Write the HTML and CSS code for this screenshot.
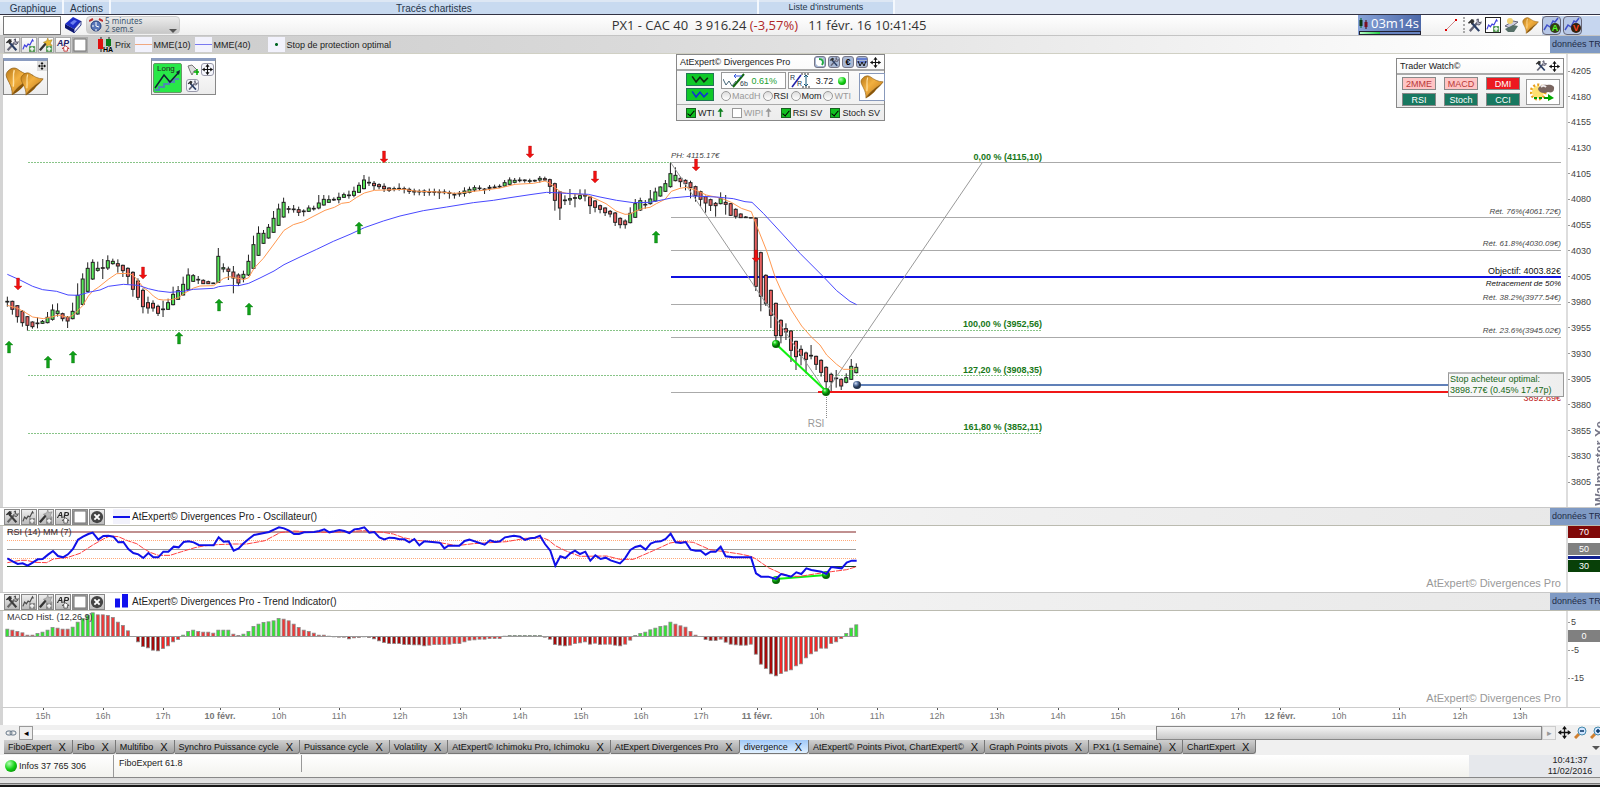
FILE: index.html
```html
<!DOCTYPE html>
<html lang="fr">

<head>
    <meta charset="utf-8">
    <title>PX1 - CAC 40</title>
    <link rel="stylesheet" href="styles.css">
</head>

<body>
    <!-- icons -->
    <svg class="sprite" width="0" height="0">
        <defs>
            <radialGradient id="ball-green" cx="35%" cy="30%">
                <stop offset="0" stop-color="#b8ffb0" />
                <stop offset=".45" stop-color="#18d018" />
                <stop offset="1" stop-color="#066a06" />
            </radialGradient>
            <radialGradient id="ball-blue" cx="35%" cy="30%">
                <stop offset="0" stop-color="#d5e0f2" />
                <stop offset=".5" stop-color="#5f7aa8" />
                <stop offset="1" stop-color="#24354f" />
            </radialGradient>
            <linearGradient id="gold" x1="0" y1="0" x2="1" y2="1">
                <stop offset="0" stop-color="#b87818" />
                <stop offset=".4" stop-color="#f2b040" />
                <stop offset="1" stop-color="#b87010" />
            </linearGradient>
        </defs>
        <symbol id="tools" viewBox="0 0 16 16">
            <path d="M3 14L12 4" stroke="#667" stroke-width="2.4" />
            <path d="M10 2l2-1v3l2 1 1-1c0 3-2 4-4 3" fill="#aab" stroke="#445" />
            <path d="M5 5l8 9" stroke="#2b3f66" stroke-width="2.4" />
            <path d="M1 5l4-4 3 1-1 1 1 1-3 3-1-2-2 1z" fill="#333" />
        </symbol>
        <symbol id="curve" viewBox="0 0 16 16">
            <path d="M1 13l2-5 2 2 2-3 2 1 3-6 1 2" fill="none" stroke="#4040e0" stroke-width="1.4" />
            <rect x="8" y="9" width="7" height="7" rx="1" fill="#5a9c5a" />
            <path d="M11.500 10v5M9 12.500h5" stroke="#fff" stroke-width="1.5" />
        </symbol>
        <symbol id="wand" viewBox="0 0 16 16">
            <path d="M1 14l7-8" stroke="#333" stroke-width="2.600" />
            <path d="M10 0l1 3 4-1-2 4 2 3-4-1-2 2-1-4-3-1 4-2z" fill="#e8b830" stroke="#a07810" stroke-width=".6" />
            <rect x="8" y="9" width="7" height="7" rx="1" fill="#5a9c5a" />
            <path d="M11.500 10v5M9 12.500h5" stroke="#fff" stroke-width="1.5" />
        </symbol>
        <symbol id="ap" viewBox="0 0 16 16">
            <text x="1" y="9" class="ap-text">AP</text>
            <path d="M11 9l4 3h-2v3h-4v-3h-2z" fill="#fff" stroke="#c03030" />
        </symbol>
        <symbol id="window" viewBox="0 0 16 16">
            <rect x="1" y="1" width="14" height="14" fill="#fff" stroke="#777" stroke-width="1.5" />
        </symbol>
        <symbol id="close" viewBox="0 0 16 16">
            <circle cx="8" cy="8" r="7" fill="#444" />
            <path d="M5 5l6 6M11 5l-6 6" stroke="#fff" stroke-width="2.200" />
        </symbol>
        <symbol id="move" viewBox="0 0 16 16">
            <path d="M8 1v14M1 8h14" stroke="#111" stroke-width="1.6" />
            <path d="M8 0l3 4H5zM8 16l3-4H5zM0 8l4-3v6zM16 8l-4-3v6z" fill="#111" />
        </symbol>
        <symbol id="bell" viewBox="0 0 28 28">
            <path d="M2 5C5 1 9 0 12 2c4 3 9 6 15 6-2 4-7 5-11 9-4 3-7 6-9 10 0-5-1-8-3-12C2 11 0 8 2 5z" fill="url(#gold)" stroke="#8a5a10" stroke-width=".7" />
            <path d="M27 8c-2 4-7 5-11 9-4 3-7 6-9 10 6-3 9-6 12-10 3-3 6-5 8-9z" fill="#8a5608" />
            <path d="M9 3c-2 5 0 9-1 16" stroke="#ffe0a0" stroke-width="1.4" fill="none" />
        </symbol>
        <symbol id="zigzag" viewBox="0 0 28 14">
            <path d="M4 3l5 7 5-6 5 6 5-5" fill="none" stroke="currentColor" stroke-width="2" />
        </symbol>
        <symbol id="up" viewBox="0 0 8 12">
            <path d="M4 0l4 5H5v7H3V5H0z" fill="currentColor" />
        </symbol>
    </svg>

    <div class="frame">
        <nav class="ribbon">
            <a href="#" class="ribbon-tab tab-first">Graphique</a>
            <a href="#" class="ribbon-tab tab-actions">Actions</a>
            <a href="#" class="ribbon-tab tab-tools">Tracés chartistes</a>
            <a href="#" class="ribbon-tab tab-list">Liste d'instruments</a>
        </nav>

        <header class="titlebar">
            <input type="text" class="symbol-box" aria-label="Valeur">
            <svg class="book" width="18" height="18" viewBox="0 0 18 18">
                <path d="M1 8l8-7 8 4-7 8z" fill="#1c2cc8" />
                <path d="M1 8l9 5v4l-9-5z" fill="#0a1470" />
                <path d="M10 13l7-8v4l-7 8z" fill="#e0e4ff" stroke="#0a1470" stroke-width=".8" />
                <path d="M6 7l4-3 3 1-4 4z" fill="#6c80f0" />
            </svg>
            <button class="period">
                <svg width="14" height="14" viewBox="0 0 14 14">
                    <circle cx="7" cy="8" r="5" fill="#5876b8" stroke="#26407c" />
                    <path d="M7 4v4l3 1M3 8h2M7 13v-2" stroke="#fff" fill="none" />
                    <path d="M0 3l4-2M10 1l4 2" stroke="#c03030" stroke-width="2" />
                </svg>
                <span>5 minutes<br>2 sem.s</span>
                <i class="caret"></i>
            </button>
            <h1>PX1 - CAC 40 &nbsp;3 916.24 <span class="change">(-3,57%)</span> &nbsp; 11 févr. 16 10:41:45</h1>
            <div class="timer">
                <svg width="10" height="14" viewBox="0 0 10 14">
                    <path d="M2 2v10" stroke="#062" stroke-width="1" /><path d="M2 4v6" stroke="#0a3a12" stroke-width="3" />
                    <path d="M7 4v9" stroke="#400" stroke-width="1" /><path d="M7 6v5" stroke="#7a1020" stroke-width="3" />
                </svg>
                <span>03m14s</span>
                <i class="timer-bar"></i>
            </div>
            <div class="actions">
                <button class="bare" aria-label="Ligne"><svg width="14" height="14" viewBox="0 0 14 14"><path d="M2 12L12 2" stroke="#c88" /><path d="M1 12h2M11 2h2" stroke="#d00" stroke-width="2" /></svg></button>
                <i class="grip"></i>
                <button class="bare" aria-label="Réglages"><svg width="15" height="15"><use href="#tools" /></svg></button>
                <button class="bare boxed" aria-label="Indicateur"><svg width="14" height="14"><use href="#curve" /></svg></button>
                <button class="bare" aria-label="Fond"><svg width="15" height="16" viewBox="0 0 15 16"><path d="M1 9l8-5 5 1-8 6z" fill="#ccd" stroke="#667" /><path d="M1 12l8-4 5 1-4 6H4z" fill="#567068" /><circle cx="6" cy="4" r="3" fill="#f0d070" /></svg></button>
                <button class="bare" aria-label="Alerte"><svg width="17" height="17"><use href="#bell" /></svg></button>
                <div class="auto">
                    <button class="bare round" aria-label="Achat"><svg width="18" height="18" viewBox="0 0 18 18"><path d="M1 14l3-5 3 2 3-6 2 1 3-4" fill="none" stroke="#4050c8" stroke-width="1.5" /><circle cx="12" cy="12" r="5" fill="#333a18" /><text x="12" y="15" class="badge buy">A</text></svg></button>
                    <button class="bare round" aria-label="Vente"><svg width="18" height="18" viewBox="0 0 18 18"><path d="M1 14l3-5 3 2 3-6 2 1 3-4" fill="none" stroke="#4050c8" stroke-width="1.5" /><circle cx="12" cy="12" r="5" fill="#33200c" /><text x="12" y="15" class="badge sell">V</text></svg></button>
                </div>
            </div>
        </header>

        <div class="legend">
            <div class="tools">
                <button aria-label="Réglages"><svg><use href="#tools" /></svg></button>
                <button aria-label="Indicateur"><svg><use href="#curve" /></svg></button>
                <button aria-label="Assistant"><svg><use href="#wand" /></svg></button>
                <button aria-label="AP"><svg><use href="#ap" /></svg></button>
                <button aria-label="Fenêtre"><svg><use href="#window" /></svg></button>
            </div>
            <svg class="ha" width="17" height="16" viewBox="0 0 17 16">
                <path d="M4 0v15M12 0v10" stroke="#222" />
                <rect x="1" y="2" width="5" height="10" fill="#e01010" /><rect x="9" y="2" width="5" height="7" fill="#0a7a1a" />
                <text x="6" y="15" class="ha-text">HA</text>
            </svg>
            <span class="key">Prix</span>
            <i class="swatch orange"></i><span class="key">MME(10)</span>
            <i class="swatch blue"></i><span class="key wide">MME(40)</span>
            <i class="swatch dot"></i><span>Stop de protection optimal</span>
            <span class="realtime">données TR</span>
        </div>

        <!-- price -->
        <section class="panel price">
            <div class="plot">
                <svg id="price" width="100%" height="453">
                    <g class="fibo">
                        <path d="M25 108.500H1039M25 276.500H1039M25 321.500H1039M25 379.500H1039" />
                        <text x="1039" y="106">0,00 % (4115,10)</text>
                        <text x="1039" y="273">100,00 % (3952,56)</text>
                        <text x="1039" y="319">127,20 % (3908,35)</text>
                        <text x="1039" y="376">161,80 % (3852,11)</text>
                    </g>
                    <g class="retrace">
                        <line x1="668" x2="100%" y1="108.500" y2="108.500" />
                        <line x1="668" x2="100%" y1="163.500" y2="163.500" />
                        <line x1="668" x2="100%" y1="196.500" y2="196.500" />
                        <line x1="668" x2="100%" y1="250.500" y2="250.500" />
                        <line x1="668" x2="100%" y1="283.500" y2="283.500" />
                        <line x1="668" x2="815" y1="338.500" y2="338.500" />
                        <line class="goal" x1="668" x2="100%" y1="223" y2="223" />
                        <text x="668" y="104" class="left">PH: 4115.17€</text>
                        <text x="100%" y="160">Rét. 76%(4061.72€)</text>
                        <text x="100%" y="192">Rét. 61.8%(4030.09€)</text>
                        <text x="100%" y="220" class="objective">Objectif: 4003.82€</text>
                        <text x="100%" y="232" class="half">Retracement de 50%</text>
                        <text x="100%" y="246">Rét. 38.2%(3977.54€)</text>
                        <text x="100%" y="279">Rét. 23.6%(3945.02€)</text>
                    </g>
                    <g id="candles"></g>
                    <path class="swing" d="M668 109L823 338L979 109" />
                    <g id="averages"></g>
                    <path class="rsi-mark" d="M823.500 341v23" />
                    <text x="813" y="373" class="rsi-label">RSI</text>
                    <line class="stop" x1="853" x2="100%" y1="331" y2="331" />
                    <line class="low" x1="815" x2="100%" y1="338" y2="338" />
                    <text x="100%" y="347" class="low-label">3892.69€</text>
                    <path class="divergence" d="M773 290L823 337" />
                    <circle cx="773" cy="290" r="4" fill="url(#ball-green)" />
                    <circle cx="823" cy="338" r="4" fill="url(#ball-green)" />
                    <circle cx="854" cy="331" r="4" fill="url(#ball-blue)" />
                    <g id="arrows"></g>
                </svg>
                <div class="tip">Stop acheteur optimal:<br>3898.77€ (0.45% 17.47p)</div>

                <div class="widget alarm">
                    <svg width="29" height="29"><use href="#bell" /></svg>
                    <svg width="24" height="24"><use href="#bell" /></svg>
                    <button aria-label="Déplacer"><svg width="8" height="8"><use href="#move" /></svg></button>
                </div>

                <div class="widget trend">
                    <div class="long">
                        <span>Long</span>
                        <svg width="28" height="28" viewBox="0 0 28 28">
                            <path d="M1 26h4v-3h5v-3h5v-2h5v-3h5" fill="none" stroke="#4d8ab0" stroke-width="2" />
                            <path d="M1 24l9-13 6 7 9-10" fill="none" stroke="#123" stroke-width="1.5" />
                            <path d="M26 6l-1 5-3-3z" fill="#123" />
                        </svg>
                    </div>
                    <div class="trend-buttons">
                        <button class="bare" aria-label="Alerte"><svg width="12" height="12" viewBox="0 0 12 12"><path d="M1 2l4-1 5 5-3 1-2 4-2-4z" fill="#ddd" stroke="#777" /><path d="M10 5v6M7 8h5" stroke="#0a0" stroke-width="1.5" /></svg></button>
                        <button aria-label="Déplacer"><svg width="11" height="11"><use href="#move" /></svg></button>
                        <button aria-label="Réglages"><svg width="11" height="11"><use href="#tools" /></svg></button>
                    </div>
                </div>

                <form class="widget divergences">
                    <div class="bar">
                        <span>AtExpert© Divergences Pro</span>
                        <button type="button" class="mini" aria-label="Actualiser"><svg width="10" height="10" viewBox="0 0 10 10"><path d="M1 1h6l2 3v5H3L1 7z" fill="#fff" /><path d="M4 2c4 0 5 3 3 6" fill="none" stroke="#2a4" stroke-width="2" /></svg></button>
                        <button type="button" class="mini" aria-label="Réglages"><svg width="10" height="10"><use href="#tools" /></svg></button>
                        <button type="button" class="mini" aria-label="Euro">€</button>
                        <button type="button" class="mini" aria-label="Oscillateur"><svg width="10" height="10" viewBox="0 0 10 10"><path d="M0 2h10M0 5h10" stroke="#24c" /><path d="M1 4l2 5 2-4 2 4 2-5" fill="none" stroke="#111" /></svg></button>
                        <button type="button" class="bare" aria-label="Déplacer"><svg width="11" height="11"><use href="#move" /></svg></button>
                    </div>
                    <div class="body">
                        <div class="signals">
                            <svg class="bear"><use href="#zigzag" /></svg>
                            <svg class="bull"><use href="#zigzag" /></svg>
                        </div>
                        <div class="measures">
                            <div class="values">
                                <div class="value gain">
                                    <svg width="26" height="15" viewBox="0 0 26 15"><path d="M0 6l3 6 3-4 3 5 4-5" fill="none" stroke="#467" /><path d="M10 14L21 1" stroke="#161" stroke-width="2" /><path d="M11 3h8M11 3l2-2M11 3l2 2" stroke="#35d" /><text x="17" y="13" class="tiny">6b</text></svg>
                                    0.61%
                                </div>
                                <div class="value">
                                    <svg width="21" height="15" viewBox="0 0 21 15"><text x="0" y="7" class="tiny">R</text><text x="7" y="13" class="tiny">R</text><path d="M2 14L11 2" stroke="#22a" stroke-width="1.500" /><path d="M16 2v11M14 4l2-2 2 2M14 11l2 2 2-2" fill="none" stroke="#157" /><path d="M11 1h9M12 14h8" stroke="#333" stroke-dasharray="2 1" /></svg>
                                    3.72 <i class="led"></i>
                                </div>
                            </div>
                            <div class="radios">
                                <label class="off"><input type="radio" name="source">MacdH</label>
                                <label><input type="radio" name="source">RSI</label>
                                <label><input type="radio" name="source">Mom</label>
                                <label class="off"><input type="radio" name="source">WTI</label>
                            </div>
                        </div>
                        <button type="button" class="ring" aria-label="Alerte"><svg width="24" height="24"><use href="#bell" /></svg></button>
                    </div>
                    <div class="checks">
                        <label><input type="checkbox" checked>WTI <svg class="yes"><use href="#up" /></svg></label>
                        <label class="off"><input type="checkbox">WIPI <svg><use href="#up" /></svg></label>
                        <label><input type="checkbox" checked>RSI SV</label>
                        <label><input type="checkbox" checked>Stoch SV</label>
                    </div>
                </form>

                <div class="widget watch">
                    <div class="bar">
                        <span>Trader Watch©</span>
                        <button class="bare" aria-label="Réglages"><svg width="12" height="12"><use href="#tools" /></svg></button>
                        <button class="bare" aria-label="Déplacer"><svg width="11" height="11"><use href="#move" /></svg></button>
                    </div>
                    <div class="watch-body">
                        <div class="watch-grid">
                            <button class="weak">2MME</button>
                            <button class="weak">MACD</button>
                            <button class="down">DMI</button>
                            <button class="good">RSI</button>
                            <button class="good">Stoch</button>
                            <button class="good">CCI</button>
                        </div>
                        <button class="weather" aria-label="Météo">
                            <svg width="26" height="18" viewBox="0 0 26 18">
                                <circle cx="8" cy="9" r="7" fill="none" stroke="#e8a020" stroke-width="3" stroke-dasharray="2 2" />
                                <circle cx="8" cy="9" r="6" fill="#ffe070" />
                                <path d="M8 6c1-4 6-5 9-4 4-1 8 1 7 4 0 3-3 4-6 3-4 2-9 1-10-3z" fill="#7a6660" />
                                <path d="M11 4c2-2 4-1 5 0" stroke="#f0eaea" stroke-width="2" fill="none" />
                                <path d="M4 15h3M9 15h3M14 15h5" stroke="#090" stroke-width="2" /><path d="M18 11l6 4-6 3z" fill="#0a0" />
                            </svg>
                        </button>
                    </div>
                </div>
            </div>
            <div class="axis">
                <ol class="scale" id="price-scale"></ol>
                <span class="vendor">Walmaster Xe</span>
            </div>
        </section>

        <!-- oscillator -->
        <div class="legend sub">
            <div class="tools">
                <button aria-label="Réglages"><svg><use href="#tools" /></svg></button>
                <button aria-label="Indicateur"><svg><use href="#curve" /></svg></button>
                <button aria-label="Assistant"><svg><use href="#wand" /></svg></button>
                <button aria-label="AP"><svg><use href="#ap" /></svg></button>
                <button aria-label="Fenêtre"><svg><use href="#window" /></svg></button>
                <button aria-label="Fermer"><svg><use href="#close" /></svg></button>
            </div>
            <i class="swatch thick"></i><span>AtExpert© Divergences Pro - Oscillateur()</span>
            <span class="realtime">données TR</span>
        </div>
        <section class="panel">
            <div class="plot">
                <svg width="100%" height="66">
                    <path class="level high" d="M4 6H853" />
                    <path class="level dots" d="M4 14.500H853M4 32.500H853" />
                    <path class="level mid" d="M4 23.500H853" />
                    <path class="level bottom" d="M4 40.500H853" />
                    <path class="divergence" d="M773 53L823 49" />
                    <circle cx="773" cy="54" r="4" fill="url(#ball-green)" />
                    <circle cx="823" cy="49" r="4" fill="url(#ball-green)" />
                    <g id="rsi"></g>
                    <text x="4" y="9" class="name">RSI (14) MM (7)</text>
                    <text x="100%" y="61" class="watermark">AtExpert© Divergences Pro</text>
                </svg>
            </div>
            <div class="axis boxes">
                <span class="box over">70</span>
                <span class="box middle">50</span>
                <span class="box now"></span>
                <span class="box under">30</span>
            </div>
        </section>

        <!-- macd -->
        <div class="legend sub">
            <div class="tools">
                <button aria-label="Réglages"><svg><use href="#tools" /></svg></button>
                <button aria-label="Indicateur"><svg><use href="#curve" /></svg></button>
                <button aria-label="Assistant"><svg><use href="#wand" /></svg></button>
                <button aria-label="AP"><svg><use href="#ap" /></svg></button>
                <button aria-label="Fenêtre"><svg><use href="#window" /></svg></button>
                <button aria-label="Fermer"><svg><use href="#close" /></svg></button>
            </div>
            <i class="swatch bars"></i><span>AtExpert© Divergences Pro - Trend Indicator()</span>
            <span class="realtime">données TR</span>
        </div>
        <section class="panel">
            <div class="plot">
                <svg width="100%" height="96">
                    <g id="macd"></g>
                    <path d="M4 25.500H853" stroke="#999" />
                    <text x="4" y="9" class="name">MACD Hist. (12,26,9)</text>
                    <text x="100%" y="91" class="watermark">AtExpert© Divergences Pro</text>
                </svg>
            </div>
            <div class="axis trend-scale">
                <span class="tick">5</span>
                <span class="box middle">0</span>
                <span class="tick">-5</span>
                <span class="tick last">-15</span>
            </div>
        </section>

        <svg class="time" id="time" width="100%" height="18"></svg>

        <div class="scroll">
            <svg width="12" height="8" viewBox="0 0 12 8"><rect x="1" y="2" width="6" height="4" rx="2" fill="none" stroke="#678" /><rect x="5" y="2" width="6" height="4" rx="2" fill="none" stroke="#678" /></svg>
            <button aria-label="Gauche">◂</button>
            <div class="track"><div class="thumb"></div></div>
            <button class="dim" aria-label="Droite">▸</button>
            <div class="zoom">
                <svg width="13" height="13"><use href="#move" /></svg>
                <svg width="13" height="13" viewBox="0 0 13 13"><path d="M1 12l4-4" stroke="#d08030" stroke-width="3" /><circle cx="8" cy="5" r="4" fill="#cfe4ff" stroke="#48a" /><path d="M6 5h4" stroke="#036" stroke-width="1.500" /></svg>
                <svg width="13" height="13" viewBox="0 0 13 13"><path d="M1 12l4-4" stroke="#d08030" stroke-width="3" /><circle cx="8" cy="5" r="4" fill="#cfe4ff" stroke="#48a" /><path d="M6 5h4M8 3v4" stroke="#036" stroke-width="1.500" /></svg>
            </div>
        </div>

        <nav class="tabs" id="tabs"><i class="more"></i></nav>

        <footer class="status">
            <div class="infos"><i class="led"></i>Infos 37 765 306</div>
            <div class="current">FiboExpert 61.8</div>
            <div class="clock">10:41:37<br>11/02/2016</div>
        </footer>
        <div class="edge"></div>
    </div>

    <script src="script.js"></script>
</body>

</html>
```

FILE: styles.css
```css
* {
    box-sizing: border-box;
}

body {
    margin: 0;
    font-family: "Liberation Sans", Arial, sans-serif;
    font-size: 9px;
    color: #222;
    background: #fff;
    overflow-x: hidden;
}

button {
    font-family: inherit;
    font-size: 9px;
    padding: 0;
    display: flex;
    align-items: center;
    justify-content: center;
    cursor: pointer;
}

.bare {
    border: none;
    background: none;
}

.sprite {
    position: absolute;
}

svg {
    display: block;
    flex: none;
}

.ap-text {
    font: italic bold 10px "Liberation Sans", sans-serif;
    fill: #226;
}

.ha-text {
    font: bold 7px "Liberation Sans", sans-serif;
}

.tiny {
    font-size: 7px;
    fill: #234;
}

/* top ribbon */
.ribbon {
    display: flex;
    height: 15px;
    background: #e0e8f4;
    border-bottom: 1px solid #334;
    overflow: hidden;
}

.ribbon-tab {
    color: #26364c;
    text-decoration: none;
    font-size: 10px;
    line-height: 12px;
    padding-top: 3px;
    text-align: center;
    background: linear-gradient(#dde7f4 2px, #c8daf0 2px);
    border-right: 2px solid #f4f8fd;
}

.tab-first {
    width: 64px;
    padding-left: 4px;
}

.tab-actions {
    width: 47px;
}

.tab-tools {
    width: 648px;
    flex-shrink: 1;
}

.tab-list {
    width: 136px;
    line-height: 10px;
    padding-top: 2px;
    font-size: 9px;
}

/* instrument bar */
.titlebar {
    display: flex;
    align-items: center;
    height: 21px;
    padding-left: 3px;
    background: linear-gradient(#fff, #f0f0f0);
    border-bottom: 1px solid #c4c4c4;
}

.titlebar h1 {
    margin: 0 auto;
    font: 13px "Open Sans", "Noto Sans", sans-serif;
    color: #333;
    white-space: pre-wrap;
}

.change {
    color: #b02828;
}

.symbol-box {
    width: 58px;
    height: 19px;
    border: 1px solid #777;
    background: #fff;
}

.book {
    margin: 0 4px 0 3px;
}

.period {
    width: 94px;
    height: 18px;
    gap: 2px;
    padding: 0 2px;
    justify-content: flex-start;
    border: 1px solid #ccc;
    border-radius: 4px;
    background: linear-gradient(#ececec, #c8c8c8);
    font: 8px "Noto Sans", sans-serif;
    line-height: 8px;
    color: #3c5670;
    text-align: left;
}

.caret,
.more {
    border: 4px solid transparent;
    border-top-color: #555;
    border-bottom: none;
    margin-left: auto;
    align-self: flex-end;
}

.timer {
    display: grid;
    grid-template-columns: 12px 1fr;
    align-items: center;
    width: 63px;
    height: 20px;
    padding-left: 1px;
    background: linear-gradient(90deg, #86a2d8, #4c68a8);
    color: #fff;
    font: 13px "Open Sans", "Noto Sans", sans-serif;
    line-height: 16px;
}

.timer-bar {
    grid-column: 1 / 3;
    height: 4px;
    border: 1px solid #223;
    background: linear-gradient(90deg, #bfc, #2c4 33%, #6884c0 33%);
}

.actions {
    display: flex;
    align-items: center;
    gap: 3px;
    padding-left: 23px;
}

.grip {
    height: 16px;
    border-left: 2px dotted #aaa;
    margin: 0 -1px 0 2px;
}

.boxed {
    border: 1px solid #222;
    background: #fff;
}

.auto {
    display: flex;
    gap: 2px;
    width: 58px;
    height: 19px;
    background: #c6d6ef;
}

.round {
    border: 1px solid #667;
    border-radius: 4px;
    width: 19px;
    background: #b8c8e6;
}

.badge {
    font: bold 9px "Liberation Sans", sans-serif;
    text-anchor: middle;
}

.buy {
    fill: #5f2;
}

.sell {
    fill: #f42;
}

/* legends above each panel */
.legend {
    display: flex;
    align-items: center;
    height: 18px;
    padding-left: 4px;
    background: linear-gradient(90deg, #c8c8c8, #dadada 40%, #fff 95%);
    border-bottom: 1px solid #d0d0c4;
    white-space: nowrap;
}

.sub {
    height: 19px;
    font-size: 10px;
    background: linear-gradient(90deg, #fff 20%, #f0f0f0 60%, #e8e8e8);
    border-top: 1px solid #c8c8c8;
    border-bottom: 1px solid #bbbbb0;
}

.tools {
    display: flex;
    gap: 1px;
}

.tools button {
    width: 16px;
    height: 16px;
    border: 1px solid #aaa;
    background: linear-gradient(#fff, #e4e4e4);
}

.tools svg {
    width: 14px;
    height: 14px;
}

.sub .tools button {
    border-color: #888;
    background: linear-gradient(#eee, #bbb);
}

.sub .tools svg {
    filter: grayscale(1);
}

.ha {
    margin: 0 1px 0 9px;
}

.key {
    margin-right: 4px;
}

.wide {
    margin-right: 17px;
}

.swatch {
    width: 17px;
    height: 15px;
    margin-right: 2px;
    background: #f2f2fc;
}

.orange {
    background: linear-gradient(#f2f2fc 7px, #f0a880 7px, #f0a880 8px, #f2f2fc 8px);
}

.blue {
    background: linear-gradient(#f2f2fc 7px, #7878f0 7px, #7878f0 8px, #f2f2fc 8px);
}

.dot {
    background: radial-gradient(circle, #062 1px, #f2f2fc 2px);
}

.thick {
    margin-left: 8px;
    background: linear-gradient(#f2f2fc 7px, #1010e8 7px, #1010e8 9px, #f2f2fc 9px);
}

.bars {
    margin-left: 8px;
    background: linear-gradient(90deg, transparent 2px, #11e 2px, #11e 7px, transparent 7px, transparent 9px, #11e 9px, #11e 15px, transparent 15px);
    clip-path: polygon(0 30%, 50% 30%, 50% 0, 100% 0, 100% 90%, 0 90%);
}

.realtime {
    width: 50px;
    height: 100%;
    margin-left: auto;
    padding-left: 2px;
    line-height: 17px;
    font-size: 9px;
    color: #222c48;
    background: #7f9ac4;
    overflow: hidden;
}

/* chart panels */
.panel {
    display: flex;
    border-left: 3px solid #d4d4d4;
}

.plot {
    position: relative;
    flex: 1;
    min-width: 0;
    padding-right: 5px;
}

.axis {
    position: relative;
    width: 34px;
    border-left: 2px solid #ddd;
    color: #444;
    overflow: hidden;
}

.scale {
    display: flex;
    flex-direction: column;
    justify-content: space-between;
    list-style: none;
    height: 436px;
    margin: 0;
    padding: 11px 0 2px;
}

.scale li,
.tick {
    display: flex;
    align-items: center;
    line-height: 12px;
}

.scale li::before,
.tick::before {
    content: "";
    width: 2px;
    height: 1px;
    margin-right: 1px;
    background: #999;
}

.vendor {
    position: absolute;
    left: 24px;
    bottom: 1px;
    font-weight: bold;
    font-size: 13px;
    line-height: 15px;
    color: #778;
    writing-mode: vertical-rl;
    transform: rotate(180deg);
}

.fibo path {
    stroke: #88c488;
    stroke-dasharray: 2 1;
}

.fibo text {
    font-weight: bold;
    fill: #187818;
    text-anchor: end;
}

.retrace line {
    stroke: #aaa;
}

.retrace .goal {
    stroke: #1010e0;
    stroke-width: 2px;
}

.retrace text {
    font-style: italic;
    font-size: 8px;
    fill: #444;
    text-anchor: end;
}

.retrace .left {
    text-anchor: start;
}

.retrace .objective {
    font-style: normal;
    font-size: 9px;
    fill: #111;
}

.retrace .half {
    fill: #111;
}

.swing {
    fill: none;
    stroke: #999;
}

.candle {
    stroke: #222;
}

.rise {
    fill: #58e858;
}

.fall {
    fill: #e86060;
}

.line {
    fill: none;
    vector-effect: non-scaling-stroke;
}

.fast {
    stroke: #ff9850;
}

.slow {
    stroke: #4848ff;
}

.osc {
    stroke: #1010e8;
    stroke-width: 2px;
}

.mean {
    stroke: #ff4040;
    stroke-dasharray: 6 1;
}

.rsi-mark {
    stroke: #888;
    stroke-dasharray: 1 1;
}

.rsi-label {
    font-size: 10px;
    fill: #999;
    text-anchor: middle;
}

.stop {
    stroke: #6080b8;
    stroke-width: 2px;
}

.low {
    stroke: #f01818;
    stroke-width: 2px;
}

.low-label {
    fill: #c02020;
    text-anchor: end;
}

.divergence {
    stroke: #10f010;
    stroke-width: 2px;
}

.level.high {
    stroke: #c09090;
    stroke-width: 2px;
}

.level.dots {
    stroke: #ffa878;
    stroke-dasharray: 1 1;
}

.level.mid {
    stroke: #999;
}

.level.bottom {
    stroke: #204820;
}

.name {
    fill: #333;
}

.watermark {
    font-size: 11px;
    fill: #999;
    text-anchor: end;
}

.tip {
    position: absolute;
    right: 2px;
    top: 318px;
    width: 116px;
    padding: 0 1px;
    line-height: 11px;
    color: #186818;
    background: linear-gradient(90deg, #f8f8f8, #eee);
    border: 1px solid #999;
    border-top: 2px solid #bbb;
    white-space: nowrap;
}

/* boxes floating on the chart */
.widget {
    position: absolute;
    background: linear-gradient(#fff, #ececec);
    border: 1px solid #888;
}

.alarm,
.trend {
    display: flex;
    top: 4px;
    height: 37px;
    border-top: 3px solid #8a9cc0;
}

.alarm {
    left: 0;
    width: 45px;
    padding: 6px 0 0 1px;
}

.alarm svg + svg {
    margin: 5px 0 0 -14px;
}

.alarm button {
    position: absolute;
    right: 0;
    top: 0;
    width: 10px;
    height: 10px;
    border: none;
    background: #ddd;
}

.trend {
    left: 148px;
    width: 65px;
    padding: 2px 1px;
    gap: 4px;
}

.long {
    position: relative;
    width: 29px;
    height: 30px;
    background: #28e848;
    border: 1px solid #696;
    border-radius: 2px;
}

.long span {
    position: absolute;
    left: 3px;
    top: 0;
    font-size: 8px;
}

.trend-buttons {
    display: grid;
    grid-template-columns: 13px 13px;
    gap: 3px 2px;
}

.trend-buttons button:last-child,
.trend-buttons button:nth-child(2) {
    border: 1px solid #99a;
    border-radius: 3px;
    background: #f4f6fc;
}

.bar {
    display: flex;
    align-items: center;
    gap: 2px;
    height: 16px;
    padding: 0 3px;
    border-bottom: 2px solid #aaa;
}

.bar span {
    margin-right: auto;
}

.divergences {
    left: 673px;
    top: 0;
    width: 209px;
    height: 67px;
}

.mini {
    width: 12px;
    height: 12px;
    border: 1px solid #778;
    border-radius: 3px;
    background: #a8b8d4;
    font-weight: bold;
}

.body {
    display: flex;
    gap: 7px;
    height: 33px;
    padding: 1px 2px 0 9px;
}

.signals {
    display: grid;
    gap: 2px;
    align-content: start;
    padding-top: 1px;
}

.signals svg {
    width: 28px;
    height: 13px;
    background: #10c828;
    border: 1px solid #275;
}

.bear {
    color: #102810;
}

.bull {
    color: #1030d8;
}

.values {
    display: flex;
    gap: 2px;
}

.value {
    display: flex;
    align-items: center;
    justify-content: space-between;
    width: 61px;
    height: 17px;
    padding: 0 2px 0 1px;
    border: 1px solid #999;
    background: #fff;
}

.gain {
    width: 65px;
    padding-right: 8px;
    color: #20a030;
}

.led {
    width: 8px;
    height: 8px;
    border-radius: 50%;
    background: radial-gradient(circle at 35% 30%, #b0ffb0, #12d012 50%, #087008);
}

.radios {
    display: flex;
    justify-content: space-between;
    padding-top: 2px;
    width: 130px;
}

label {
    display: flex;
    align-items: center;
    color: #222;
}

.off {
    color: #999;
}

input[type="radio"] {
    appearance: none;
    width: 10px;
    height: 10px;
    margin: 0 1px 0 0;
    border: 1px solid #999;
    border-radius: 50%;
    background: linear-gradient(#ddd, #fff);
}

.ring {
    width: 26px;
    height: 28px;
    margin: 1px 0 0 1px;
    border: 1px solid #89b;
    background: #fff;
}

.checks {
    display: flex;
    justify-content: space-between;
    height: 16px;
    padding: 0 4px 0 9px;
    border-top: 1px solid #aaa;
    white-space: nowrap;
}

.checks svg {
    width: 7px;
    height: 9px;
    margin-left: 2px;
}

.yes {
    color: #108020;
}

input[type="checkbox"] {
    appearance: none;
    position: relative;
    width: 10px;
    height: 10px;
    margin: 0 2px 0 0;
    border: 1px solid #999;
    background: #fff;
}

input[type="checkbox"]:checked {
    background: #10c020;
    border-color: #186020;
}

input[type="checkbox"]:checked::after {
    content: "";
    position: absolute;
    left: 2px;
    top: 0;
    width: 3px;
    height: 6px;
    border: solid #000;
    border-width: 0 1px 1px 0;
    transform: rotate(40deg);
}

.watch {
    right: 2px;
    top: 4px;
    width: 168px;
    height: 50px;
}

.watch-body {
    display: flex;
    align-items: center;
    gap: 6px;
    padding: 2px 3px 0 5px;
}

.watch-grid {
    display: grid;
    grid-template-columns: repeat(3, 34px);
    gap: 3px 8px;
}

.watch-grid button {
    height: 13px;
    border: 1px solid #888;
    color: #fff;
}

.watch-grid .weak {
    background: #ffc4c4;
    color: #b83838;
}

.watch-grid .down {
    background: #ec1820;
}

.watch-grid .good {
    background: #187860;
}

.weather {
    width: 34px;
    height: 26px;
    border: 1px solid #999;
    background: #fff;
}

/* scales of the lower panels */
.boxes,
.trend-scale {
    display: flex;
    flex-direction: column;
}

.box {
    display: block;
    height: 12px;
    line-height: 12px;
    text-align: center;
    color: #fff;
}

.over {
    background: #800808;
}

.middle {
    margin-top: 5px;
    background: #808080;
}

.now {
    height: 3px;
    margin-top: 1px;
    background: #102090;
}

.under {
    margin-top: 1px;
    background: #084008;
}

.trend-scale {
    padding-top: 5px;
}

.trend-scale .middle {
    margin: 2px 0;
}

.last {
    margin-top: 16px;
}

.time {
    border-left: 3px solid #d4d4d4;
    border-top: 1px solid #ccc;
    overflow: visible;
}

.time text {
    fill: #777;
    text-anchor: middle;
}

.time .day {
    font-weight: bold;
}

/* bottom bars */
.scroll {
    display: flex;
    align-items: center;
    height: 15px;
    padding-left: 5px;
    background: #f0f0f0;
}

.scroll button {
    width: 14px;
    height: 14px;
    margin-left: 2px;
    border: 1px solid #999;
    background: #eee;
}

.scroll .dim {
    margin: 0;
    border-color: #ccc;
    color: #999;
}

.track {
    display: flex;
    justify-content: flex-end;
    align-items: center;
    flex: 1;
    height: 5px;
    background: #fff;
}

.thumb {
    width: 386px;
    height: 14px;
    border: 1px solid #888;
    background: linear-gradient(#f4f4f4, #c8c8c8);
}

.zoom {
    display: flex;
    gap: 3px;
    width: 44px;
    padding-left: 2px;
    overflow: hidden;
}

.tabs {
    display: flex;
    height: 15px;
    padding-left: 4px;
    background: #f0f0f0;
    white-space: nowrap;
}

.tab {
    display: flex;
    align-items: center;
    gap: 7px;
    height: 14px;
    padding: 0 6px 0 4px;
    border: 1px solid #777;
    border-width: 0 1px 1px 0;
    border-radius: 0 0 3px 0;
    background: linear-gradient(#d0d0d0, #a0a0a0);
    color: #111;
    text-decoration: none;
}

.tab b {
    font-weight: normal;
    font-size: 11px;
}

.tab.active {
    background: linear-gradient(#a0c8f8, #e0f0ff);
}

.more {
    align-self: center;
}

.status {
    display: flex;
    height: 22px;
    padding-left: 5px;
    background: linear-gradient(#fff, #f2f2ee);
    white-space: nowrap;
}

.infos {
    display: flex;
    align-items: center;
    gap: 2px;
    width: 109px;
    border-right: 1px solid #999;
}

.infos .led {
    width: 12px;
    height: 12px;
}

.current {
    width: 188px;
    height: 17px;
    padding-left: 5px;
    line-height: 17px;
    border-right: 1px solid #999;
}

.clock {
    width: 131px;
    margin-left: auto;
    padding-left: 71px;
    line-height: 11px;
    text-align: center;
    background: #e6e8ec;
}

.edge {
    height: 10px;
    background: linear-gradient(#888 1px, #ddd 1px, #e4e4e4 6px, #777 6px, #777 7px, #bbb 7px, #bbb 8px, #181818 8px);
}
```

FILE: script.js
```js
var NS = "http://www.w3.org/2000/svg";
var STEP = 15.07;
var START = 22;

function add(parent, tag, attrs, text) {
    var node = document.createElementNS(NS, tag);
    for (var key in attrs) {
        node.setAttribute(key, attrs[key]);
    }
    if (text) {
        node.textContent = text;
    }
    parent.appendChild(node);
    return node;
}

function el(id) {
    return document.getElementById(id);
}

// one bar: high, body top, body bottom, low, in thirds of a pixel
var firstHalf = "560,574,576,590,g 572,574,598,614 585,587,620,638 600,604,638,650 618,620,646,662 634,636,650,656 622,639,641,655 630,634,640,642,g 606,622,638,640,g 583,600,628,632,g 580,603,611,620,g 608,611,626,634 618,622,633,654 578,604,626,628,g 520,556,612,614,g 490,507,583,586,g 457,475,544,546,g 448,457,507,510,g 455,475,481,485,g 447,473,475,507 436,452,474,480,g 446,454,461,464,g 448,461,468,488 464,466,482,501 472,475,499,523 484,487,538,560 505,513,562,570 535,541,590,610 560,578,594,611 571,580,594,605 584,589,610,618 572,597,599,621 566,578,598,600,g 530,553,584,586,g 528,542,568,570,g 500,523,555,556,g 475,495,538,540,g 492,497,514,516,g 498,508,510,522 508,511,521,522 512,515,521,522 518,519,521,522 414,439,517,518,g 460,473,477,487,g 470,477,484,510 468,486,504,550 490,495,519,528 482,493,504,517,g 434,454,495,498,g 377,404,475,477,g 349,370,436,438,g 360,370,400,402,g 342,352,384,386,g 303,325,367,368,g 281,297,346,348,g 263,277,321,323,g 288,296,298,310 285,297,299,308,g 290,299,307,318 298,303,305,319 286,294,304,306,g 287,295,297,302 255,279,294,298,g 255,268,285,287,g 256,269,277,278,g 262,268,270,273 248,262,269,280,g 248,254,262,263,g 242,255,257,266,g 230,244,256,262,g 217,226,247,248,g 195,210,236,238,g 200,217,219,228 213,220,227,240 220,224,230,238 220,229,236,246 232,234,241,246 230,236,238,244,g 220,235,237,242,g 230,236,238,250 233,238,244,252 236,243,246,256 238,244,246,256 238,243,246,258";
var secondHalf = "176,185,187,197 176,185,187,197 178,186,188,207 178,186,188,193 182,188,190,206 188,192,195,206 183,190,192,200 172,183,190,200,g 170,178,187,190,g 166,173,180,186,g 166,174,176,182 174,177,179,192 165,172,175,182 164,171,174,177 163,169,171,174 150,158,168,170,g 142,150,163,165,g 144,151,157,160,g 142,150,152,157 148,150,152,158 146,152,154,162,g 149,151,153,156 138,145,150,158,g 140,146,150,152 146,149,169,192 158,161,211,242 183,186,234,270 196,210,212,225 177,206,210,225,g 192,203,205,232 178,197,205,210,g 178,196,198,214 198,201,227,252 210,213,232,247 224,227,238,250 232,234,248,258 240,244,252,262 246,249,277,288 262,265,284,295 268,273,284,296 232,250,278,280,g 207,221,262,264,g 203,212,240,243,g 210,223,225,236 180,207,221,224,g 173,186,213,216,g 169,171,198,200,g 150,161,184,186,g 98,131,170,173,g 112,136,152,154,g 140,145,155,172 148,151,161,181 152,158,173,205 167,170,197,215 182,185,208,230 197,200,219,248 206,209,226,243 216,220,227,260 187,206,221,223,g 195,217,223,254 219,221,256,258 235,238,259,266 250,252,263,264 258,261,263,264 261,263,264,265 262,265,469,483 365,368,499,544 433,436,520,528 479,481,556,594 518,520,617,640 568,571,617,640 580,596,606,630 601,603,661,696 632,634,680,720 646,658,676,706 665,669,688,730 645,676,678,688 677,679,703,720 688,691,727,740 709,712,755,785 728,733,755,785 720,744,746,773 745,748,768,780 730,743,757,760,g 687,709,748,750,g 700,712,728,730,g";

function drawCandles(data, first, top) {
    data.split(" ").forEach(function (row, n) {
        var v = row.split(",");
        var x = (START + (first + n) * STEP) / 3 - 3;
        var y = v.slice(0, 4).map(function (p) { return p / 3 + top; });
        add(el("candles"), "line", { x1: x, x2: x, y1: y[0], y2: y[3], "class": "candle" });
        add(el("candles"), "rect", {
            x: x - 1.5, y: y[1], width: 3, height: Math.max(y[2] - y[1], 0.4),
            "class": "candle " + (v[4] ? "rise" : "fall")
        });
    });
}
drawCandles(firstHalf, 0, 56);
drawCandles(secondHalf, 84, 76);

function drawLine(id, name, x, y, points) {
    add(el(id), "polyline", {
        points: points, "class": "line " + name,
        transform: "translate(" + x + " " + y + ") scale(" + 1 / 3 + ")"
    });
}
drawLine("averages", "fast", -3, 56, "22,586 53,595 75,607 98,621 130,626 159,620 174,615 204,622 219,616 249,586 265,558 280,542 295,532 325,508 350,491 385,490 400,496 415,513 430,533 445,543 460,558 475,568 490,570 515,569 536,563 551,551 581,534 600,528 641,527 671,505 690,500 701,503 716,505 731,509 746,503 762,475 790,445 822,402 852,361 880,344 910,335 942,318 975,301 1003,292 1025,280 1048,277 1070,262 1093,249 1123,241 1153,240 1213,238 1243,243 1260,244");
drawLine("averages", "fast", 397, 76, "60,184 120,186 165,190 195,187 240,182 300,174 345,163 400,160 435,153 450,160 467,174 482,186 500,190 527,192 560,195 588,207 618,221 648,243 675,253 690,252 708,243 730,235 750,232 769,221 795,208 814,184");
drawLine("averages", "fast", 647, 76, "64,184 90,175 109,172 139,181 169,195 214,205 244,217 274,235 304,245 319,285 349,360 375,440 395,485 424,540 455,588 485,622 510,645 530,675 560,703 580,718 605,718 620,716");
drawLine("averages", "slow", -3, 56, "22,493 60,510 98,529 128,539 170,544 204,555 234,556 270,546 300,540 325,529 370,523 415,526 445,536 475,543 510,547 550,544 580,538 641,535 656,530 690,526 716,527 746,520 780,504 822,483 852,464 900,441 950,418 1000,394 1050,373 1093,353 1150,333 1200,318");
drawLine("averages", "slow", 397, 76, "0,258 70,242 140,231 220,218 280,211 330,203 390,194 440,187 500,190 565,193 600,201 650,211 700,218 750,217 790,209 814,204");
drawLine("averages", "slow", 647, 76, "64,204 130,198 200,201 250,206 285,215 306,217 340,250 400,315 450,370 520,440 560,482 600,514 620,524");

drawLine("rsi", "mean", -3, -26, "22,188 60,181 80,181 105,187 140,188 160,177 204,172 240,160 280,134 310,117 330,108 355,110 385,123 410,131 430,145 450,157 475,166 510,166 545,155 585,143 610,138 650,134 700,132 740,132 795,122 840,98 880,93 920,95 980,97 1040,95 1090,92 1150,97 1180,102 1210,113 1250,121 1320,128");
drawLine("rsi", "mean", 437, -26, "0,128 50,137 100,131 200,125 255,115 310,114 325,120 346,137 376,152 420,169 500,168 540,178 580,178 640,152 690,129 720,124 760,127 810,149 860,156 900,162 933,169 948,177 985,203 1023,220 1053,229 1080,229 1130,221 1174,215 1220,209 1250,200");
drawLine("rsi", "osc", -3, -26, "22,175 38,184 53,192 68,190 83,197 98,188 113,178 128,177 144,164 159,153 174,168 189,172 204,163 219,147 234,119 249,110 265,102 278,98 295,119 310,108 325,107 340,110 355,127 370,126 385,147 400,159 415,163 430,174 445,159 460,172 475,172 490,155 505,155 521,140 536,142 551,126 566,124 581,127 596,135 641,136 656,112 671,125 686,124 701,152 716,145 731,130 746,117 762,105 777,102 807,96 822,89 837,82 852,85 867,92 882,102 897,102 912,97 942,96 958,93 973,88 988,97 1003,94 1018,90 1033,93 1048,99 1063,88 1078,86 1093,82 1108,98 1123,96 1138,112 1153,118 1168,113 1183,114 1198,118 1213,118 1228,127 1243,117 1258,136 1273,124 1320,128");
drawLine("rsi", "osc", 437, -26, "0,128 13,145 25,137 58,137 74,123 88,119 134,134 150,121 165,126 180,124 195,112 222,107 240,110 255,120 270,115 285,113 300,107 315,132 331,152 346,197 361,169 376,174 391,160 405,152 420,162 436,155 451,182 466,166 482,177 497,173 512,181 540,190 555,175 571,150 586,141 601,137 617,149 632,131 647,125 662,124 677,117 692,101 707,127 722,129 737,126 752,149 767,152 782,152 797,164 812,155 827,155 842,140 857,169 880,172 933,172 948,220 963,230 985,230 1008,237 1023,222 1038,226 1053,230 1069,217 1084,222 1099,205 1114,210 1144,215 1159,222 1174,201 1205,205 1220,188 1235,182 1250,182");

// buy and sell arrows, centre points in the plot
var arrows = {
    sell: [[15, 230], [140, 219], [381, 103], [527, 98], [592, 123], [693, 111], [753, 202]],
    buy: [[6, 293], [45, 308], [70, 303], [176, 284], [216, 251], [246, 255], [356, 174], [653, 183]]
};
arrows.sell.forEach(function (p) {
    add(el("arrows"), "path", { d: "M" + p[0] + " " + (p[1] + 6) + "l-4 -4h2.5v-8h3v8h2.5z", fill: "#f01010", stroke: "#a01010", "stroke-width": 0.3 });
});
arrows.buy.forEach(function (p) {
    add(el("arrows"), "path", { d: "M" + p[0] + " " + (p[1] - 6) + "l-4 4h2.5v8h3v-8h2.5z", fill: "#10a018", stroke: "#0a6a10", "stroke-width": 0.3 });
});

var macd = [22, 19, 15, 11, 4, 4, 9, 13, 19, 27, 25, 22, 22, 28, 43, 54, 64, 71, 65, 65, 63, 57, 43, 33, 17, 0, -16, -30, -34, -41, -43, -36, -28, -16, -9, 4, 15, 19, 15, 13, 13, 10, 19, 19, 19, 7, 3, 7, 15, 30, 37, 42, 44, 47, 54, 52, 47, 37, 27, 19, 15, 10, 4, 4, 1, -1, -2, -2, -7, -4, -3, -1, -3, -7, -13, -18, -21, -21, -21, -24, -24, -25, -25, -28, -26, -24, -24, -24, -23, -21, -21, -16, -11, -10, -8, -8, -6, -6, -6, 1, 3, 3, 3, 3, 3, 3, 3, -2, -8, -24, -26, -28, -26, -21, -19, -16, -23, -20, -24, -23, -23, -26, -28, -23, -11, 3, 9, 13, 20, 25, 30, 32, 43, 37, 32, 28, 15, 4, 0, -9, -12, -12, -8, -17, -23, -25, -26, -26, -23, -53, -83, -96, -112, -118, -111, -104, -100, -88, -82, -64, -52, -44, -35, -35, -21, -16, -6, 9, 25, 35];
var wasRising = true;
macd.forEach(function (v, i) {
    var before = i ? macd[i - 1] : 0;
    if (v !== before) {
        wasRising = v > before;
    }
    if (!v) {
        return;
    }
    var color = v > 0 ? (wasRising ? "#30e830" : "#f03838") : (wasRising ? "#f02828" : "#a80808");
    add(el("macd"), "rect", {
        x: (START + i * STEP) / 3 - 4.5, y: v > 0 ? 25.5 - v / 3 : 25.5,
        width: 3, height: Math.abs(v) / 3, fill: color, stroke: "#888", "stroke-width": 0.8
    });
});

for (var price = 4205; price >= 3805; price -= 25) {
    var item = document.createElement("li");
    item.textContent = price;
    el("price-scale").appendChild(item);
}

var hours = [[40, "15h"], [100, "16h"], [160, "17h"], [217, "10 févr."], [276, "10h"], [336, "11h"], [397, "12h"], [457, "13h"], [517, "14h"], [578, "15h"], [638, "16h"], [698, "17h"], [754, "11 févr."], [814, "10h"], [874, "11h"], [934, "12h"], [994, "13h"], [1055, "14h"], [1115, "15h"], [1175, "16h"], [1235, "17h"], [1277, "12 févr."], [1336, "10h"], [1396, "11h"], [1457, "12h"], [1517, "13h"]];
hours.forEach(function (h) {
    add(el("time"), "path", { d: "M" + h[0] + ".5 0v2", stroke: "#555" });
    add(el("time"), "text", { x: h[0], y: 11, "class": h[1].length > 3 ? "day" : "hour" }, h[1]);
});

var pages = ["FiboExpert", "Fibo", "Multifibo", "Synchro Puissance cycle", "Puissance cycle", "Volatility", "AtExpert© Ichimoku Pro, Ichimoku", "AtExpert Divergences Pro", "divergence", "AtExpert© Points Pivot, ChartExpert©", "Graph Points pivots", "PX1 (1 Semaine)", "ChartExpert"];
pages.forEach(function (name) {
    var tab = document.createElement("a");
    tab.href = "#";
    tab.className = name === "divergence" ? "tab active" : "tab";
    tab.innerHTML = name + "<b>X</b>";
    el("tabs").insertBefore(tab, el("tabs").lastElementChild);
});
```
